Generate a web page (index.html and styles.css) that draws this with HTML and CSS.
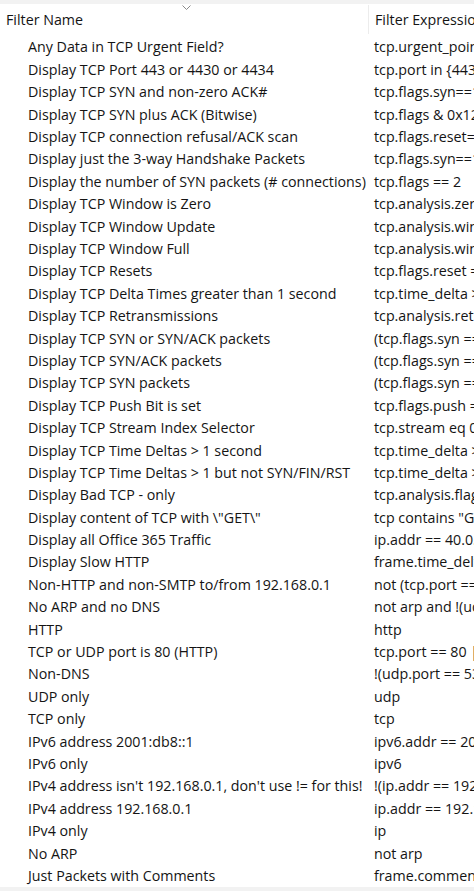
FILE: index.html
```html
<!DOCTYPE html>
<html>
<head>
<meta charset="utf-8">
<link rel="stylesheet" href="styles.css">
</head>
<body>
<div class="frame">
  <div class="topband"></div>
  <div class="header">
    <div class="hcell hname">Filter Name
      <svg class="chev" width="9" height="6" viewBox="0 0 9 6"><polyline points="0.5,0.5 4.5,4.5 8.5,0.5" fill="none" stroke="#8a8a8a" stroke-width="1"/></svg>
    </div>
    <div class="hcell hexpr">Filter Expression</div>
  </div>
  <div class="rows">
    <div class="row"><div class="c1">Any Data in TCP Urgent Field?</div><div class="c2">tcp.urgent_pointer</div></div>
    <div class="row"><div class="c1">Display TCP Port 443 or 4430 or 4434</div><div class="c2">tcp.port in {443 4430 4434}</div></div>
    <div class="row"><div class="c1">Display TCP SYN and non-zero ACK#</div><div class="c2">tcp.flags.syn==1</div></div>
    <div class="row"><div class="c1">Display TCP SYN plus ACK (Bitwise)</div><div class="c2">tcp.flags &amp; 0x12</div></div>
    <div class="row"><div class="c1">Display TCP connection refusal/ACK scan</div><div class="c2">tcp.flags.reset==1</div></div>
    <div class="row"><div class="c1">Display just the 3-way Handshake Packets</div><div class="c2">tcp.flags.syn==1</div></div>
    <div class="row"><div class="c1">Display the number of SYN packets (# connections)</div><div class="c2">tcp.flags == 2</div></div>
    <div class="row"><div class="c1">Display TCP Window is Zero</div><div class="c2">tcp.analysis.zero_window</div></div>
    <div class="row"><div class="c1">Display TCP Window Update</div><div class="c2">tcp.analysis.window_update</div></div>
    <div class="row"><div class="c1">Display TCP Window Full</div><div class="c2">tcp.analysis.window_full</div></div>
    <div class="row"><div class="c1">Display TCP Resets</div><div class="c2">tcp.flags.reset == 1</div></div>
    <div class="row"><div class="c1">Display TCP Delta Times greater than 1 second</div><div class="c2">tcp.time_delta &gt; 1</div></div>
    <div class="row"><div class="c1">Display TCP Retransmissions</div><div class="c2">tcp.analysis.retransmission</div></div>
    <div class="row"><div class="c1">Display TCP SYN or SYN/ACK packets</div><div class="c2">(tcp.flags.syn == 1)</div></div>
    <div class="row"><div class="c1">Display TCP SYN/ACK packets</div><div class="c2">(tcp.flags.syn == 1)</div></div>
    <div class="row"><div class="c1">Display TCP SYN packets</div><div class="c2">(tcp.flags.syn == 1)</div></div>
    <div class="row"><div class="c1">Display TCP Push Bit is set</div><div class="c2">tcp.flags.push == 1</div></div>
    <div class="row"><div class="c1">Display TCP Stream Index Selector</div><div class="c2">tcp.stream eq 0</div></div>
    <div class="row"><div class="c1">Display TCP Time Deltas &gt; 1 second</div><div class="c2">tcp.time_delta &gt; 1</div></div>
    <div class="row"><div class="c1">Display TCP Time Deltas &gt; 1 but not SYN/FIN/RST</div><div class="c2">tcp.time_delta &gt; 1</div></div>
    <div class="row"><div class="c1">Display Bad TCP - only</div><div class="c2">tcp.analysis.flags</div></div>
    <div class="row"><div class="c1">Display content of TCP with \"GET\"</div><div class="c2">tcp contains "GET"</div></div>
    <div class="row"><div class="c1">Display all Office 365 Traffic</div><div class="c2">ip.addr == 40.0.0.0/10</div></div>
    <div class="row"><div class="c1">Display Slow HTTP</div><div class="c2">frame.time_delta &gt; 1</div></div>
    <div class="row"><div class="c1">Non-HTTP and non-SMTP to/from 192.168.0.1</div><div class="c2">not (tcp.port == 80)</div></div>
    <div class="row"><div class="c1">No ARP and no DNS</div><div class="c2">not arp and !(udp.port == 53)</div></div>
    <div class="row"><div class="c1">HTTP</div><div class="c2">http</div></div>
    <div class="row"><div class="c1">TCP or UDP port is 80 (HTTP)</div><div class="c2">tcp.port == 80 || udp.port == 80</div></div>
    <div class="row"><div class="c1">Non-DNS</div><div class="c2">!(udp.port == 53 || tcp.port == 53)</div></div>
    <div class="row"><div class="c1">UDP only</div><div class="c2">udp</div></div>
    <div class="row"><div class="c1">TCP only</div><div class="c2">tcp</div></div>
    <div class="row"><div class="c1">IPv6 address 2001:db8::1</div><div class="c2">ipv6.addr == 2001:db8::1</div></div>
    <div class="row"><div class="c1">IPv6 only</div><div class="c2">ipv6</div></div>
    <div class="row"><div class="c1">IPv4 address isn't 192.168.0.1, don't use != for this!</div><div class="c2">!(ip.addr == 192.168.0.1)</div></div>
    <div class="row"><div class="c1">IPv4 address 192.168.0.1</div><div class="c2">ip.addr == 192.168.0.1</div></div>
    <div class="row"><div class="c1">IPv4 only</div><div class="c2">ip</div></div>
    <div class="row"><div class="c1">No ARP</div><div class="c2">not arp</div></div>
    <div class="row"><div class="c1">Just Packets with Comments</div><div class="c2">frame.comment</div></div>
  </div>
  <div class="bottomband"></div>
</div>
</body>
</html>
```
FILE: styles.css
```css
* { box-sizing: border-box; }
html, body { margin: 0; padding: 0; background: #ffffff; }
.frame {
  width: 474px;
  height: 891px;
  overflow: hidden;
  display: flex;
  flex-direction: column;
  font-family: "Open Sans", "Noto Sans", sans-serif;
  font-size: 14.25px;
  color: #141414;
}
.topband { height: 4px; background: #f2f2f2; flex: none; }
.header {
  height: 31.8px;
  display: grid;
  grid-template-columns: 368px 1fr;
  flex: none;
}
.hcell {
  position: relative;
  display: flex;
  align-items: center;
  white-space: nowrap;
  overflow: hidden;
  padding-left: 6px;
}
.hexpr { border-left: 1px solid #ececec; margin: 1px 0 2px; }
.chev { position: absolute; left: 182px; top: 1px; }
.rows { display: flex; flex-direction: column; flex: none; }
.row {
  height: 22.4px;
  display: grid;
  grid-template-columns: 368px 1fr;
  align-items: center;
  white-space: nowrap;
}
.c1 { padding-left: 28px; overflow: hidden; }
.c2 { padding-left: 6px; overflow: hidden; }
.bottomband { flex: 1; background: #f2f2f2; margin-top: 0.6px; }
```
